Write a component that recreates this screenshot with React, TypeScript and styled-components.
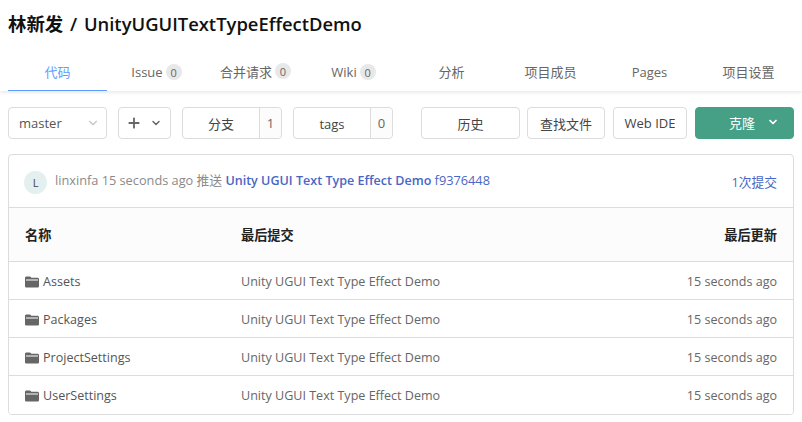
import styled, { createGlobalStyle } from 'styled-components';
import { ChevronDown, Plus } from 'lucide-react';

const GlobalStyle = createGlobalStyle`
  html, body {
    margin: 0;
    padding: 0;
    background: #fff;
    font-family: "Open Sans", "Noto Sans CJK SC", sans-serif;
    overflow: hidden;
  }
  * { box-sizing: border-box; }
`;

const Page = styled.div`
  width: 802px;
  height: 422px;
  overflow: hidden;
`;

const Title = styled.h1`
  margin: 0;
  height: 51px;
  padding: 12px 0 0 8px;
  font-size: 18.4px;
  line-height: 24px;
  font-weight: 600;
  word-spacing: 2px;
  color: #111;
`;

const Tabs = styled.nav`
  display: grid;
  grid-template-columns: 99px 99px 99px 97px 99px 99px 99px 99px;
  padding-left: 8px;
  height: 40px;
  box-shadow: 0 2px 3px rgba(0, 0, 0, 0.08);
`;

// $latin: latin labels sit a pixel higher than CJK ones, push them back down
const Tab = styled.a<{ $active?: boolean; $latin?: boolean }>`
  display: flex;
  align-items: center;
  justify-content: center;
  gap: 3px;
  height: 40px;
  font-size: 13px;
  padding-top: ${p => (p.$latin ? 3 : 1)}px;
  color: ${p => (p.$active ? '#5c9dff' : '#666')};
  border-bottom: 1px solid ${p => (p.$active ? '#5c9dff' : 'transparent')};
`;

const Count = styled.span`
  display: inline-flex;
  align-items: center;
  justify-content: center;
  width: 16px;
  height: 16px;
  border-radius: 8px;
  background: #e8e8e8;
  color: #666;
  font-size: 11px;
`;

const Toolbar = styled.div`
  display: flex;
  align-items: center;
  margin: 16px 8px 15px;
  height: 32px;
`;

const Control = styled.div<{ $w: number; $ml?: number }>`
  display: flex;
  align-items: center;
  justify-content: center;
  width: ${p => p.$w}px;
  height: 32px;
  margin-left: ${p => p.$ml ?? 0}px;
  border: 1px solid #dcdcdc;
  border-radius: 4px;
  background: #fff;
  font-size: 13px;
  color: #444;
`;

const BranchSelect = styled(Control)`
  justify-content: space-between;
  padding: 0 6px 0 10px;
  color: #555;
`;

const AddButton = styled(Control)`
  gap: 8px;
  padding-right: 2px;
  color: #666;
`;

const CountLabel = styled.span<{ $latin?: boolean }>`
  flex: 1;
  text-align: center;
  padding-top: ${p => (p.$latin ? 2 : 0)}px;
`;

const CountValue = styled.span`
  display: flex;
  align-items: center;
  justify-content: center;
  width: 22px;
  height: 100%;
  border-left: 1px solid #dcdcdc;
  background: #fcfcfc;
  color: #666;
  border-radius: 0 4px 4px 0;
`;

const CloneButton = styled(Control)`
  background: #45a085;
  border-color: #45a085;
  color: #fff;
  gap: 12px;
  padding: 0 0 2px 19px;
`;

const Panel = styled.section`
  margin: 0 8px;
  height: 261px;
  border: 1px solid #dcdcdc;
  border-radius: 4px;
  overflow: hidden;
`;

const CommitBar = styled.div`
  display: flex;
  align-items: center;
  height: 53px;
  padding: 0 16px 0 15px;
  border-bottom: 1px solid #dcdcdc;
  font-size: 12.75px;
  color: #8a8a8a;
`;

const Avatar = styled.span`
  display: flex;
  align-items: center;
  justify-content: center;
  width: 23px;
  height: 23px;
  margin: 2px 8px 0 0;
  border-radius: 50%;
  background: #e4f0ef;
  color: #444;
  font-size: 11px;
`;

const CommitText = styled.span`
  flex: 1;
  margin-top: -3px;
`;

const CommitLink = styled.a<{ $bold?: boolean }>`
  color: #4a66c4;
  font-size: ${p => (p.$bold ? '12.55px' : 'inherit')};
  font-weight: ${p => (p.$bold ? 600 : 400)};
`;

const Row = styled.div<{ $head?: boolean }>`
  display: grid;
  grid-template-columns: 216px 1fr 200px;
  align-items: center;
  height: ${p => (p.$head ? '54px' : '38px')};
  padding: ${p => (p.$head ? 0 : 2)}px 16px 0;
  font-size: ${p => (p.$head ? '13.2px' : '12.55px')};
  color: ${p => (p.$head ? '#222' : '#666')};
  font-weight: ${p => (p.$head ? 600 : 400)};
  background: ${p => (p.$head ? '#fcfcfc' : '#fff')};
  border-bottom: 1px solid #dcdcdc;
  &:last-child { border-bottom-color: transparent; }
`;

const NameCell = styled.span`
  display: flex;
  align-items: center;
  gap: 4px;
  color: #555;
`;

const Folder = styled.svg`
  width: 14px;
  height: 14px;
  flex: none;
`;

const Right = styled.span`
  text-align: right;
`;

const tabs = ['Issue', '合并请求', 'Wiki'];
const files = ['Assets', 'Packages', 'ProjectSettings', 'UserSettings'];

export default function App() {
  return (
    <Page>
      <GlobalStyle />
      <Title>林新发 / UnityUGUITextTypeEffectDemo</Title>
      <Tabs>
        <Tab $active>代码</Tab>
        {tabs.map(t => (
          <Tab key={t} $latin={t !== '合并请求'}>
            {t} <Count>0</Count>
          </Tab>
        ))}
        <Tab>分析</Tab>
        <Tab>项目成员</Tab>
        <Tab $latin>Pages</Tab>
        <Tab>项目设置</Tab>
      </Tabs>
      <Toolbar>
        <BranchSelect $w={99}>
          master
          <ChevronDown size={14} color="#c4c4c4" />
        </BranchSelect>
        <AddButton $w={53} $ml={11}>
          <Plus size={16} strokeWidth={2.75} />
          <ChevronDown size={12} strokeWidth={3} />
        </AddButton>
        <Control $w={100} $ml={11}>
          <CountLabel>分支</CountLabel>
          <CountValue>1</CountValue>
        </Control>
        <Control $w={100} $ml={11}>
          <CountLabel $latin>tags</CountLabel>
          <CountValue>0</CountValue>
        </Control>
        <Control $w={99} $ml={28}>历史</Control>
        <Control $w={78} $ml={7}>查找文件</Control>
        <Control $w={74} $ml={8}>Web IDE</Control>
        <CloneButton $w={99} $ml={8}>
          克隆
          <ChevronDown size={12} strokeWidth={3.5} />
        </CloneButton>
      </Toolbar>
      <Panel>
        <CommitBar>
          <Avatar>L</Avatar>
          <CommitText>
            linxinfa 15 seconds ago 推送 <CommitLink $bold>Unity UGUI Text Type Effect Demo</CommitLink>{' '}
            <CommitLink>f9376448</CommitLink>
          </CommitText>
          <CommitLink>1次提交</CommitLink>
        </CommitBar>
        <Row $head>
          <span>名称</span>
          <span>最后提交</span>
          <Right>最后更新</Right>
        </Row>
        {files.map(f => (
          <Row key={f}>
            <NameCell>
              <Folder viewBox="0 0 14 14">
                <path
                  d="M1.500 1.500h3.600l1.300 1.300h6.100c.8 0 1.500.6 1.500 1.400v7c0 .8-.7 1.400-1.500 1.400h-11C.7 12.600 0 12 0 11.200V2.900C0 2.100.7 1.500 1.500 1.500z"
                  fill="#666"
                />
                <rect x="1" y="4.500" width="12" height="1" fill="#fff" />
              </Folder>
              {f}
            </NameCell>
            <span>Unity UGUI Text Type Effect Demo</span>
            <Right>15 seconds ago</Right>
          </Row>
        ))}
      </Panel>
    </Page>
  );
}
